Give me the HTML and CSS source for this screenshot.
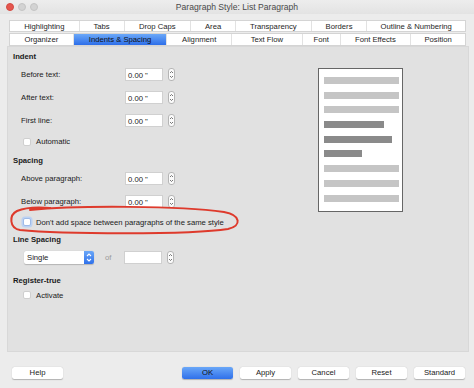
FILE: index.html
```html
<!DOCTYPE html>
<html lang="en">
<head>
  <meta charset="UTF-8" />
  <title>Paragraph Style: List Paragraph</title>
  <link rel="stylesheet" href="styles.css">
</head>
<body>
  <div class="window">

    <!-- TITLE BAR -->
    <div class="titlebar">
      <div class="lights">
        <span class="light red"></span>
        <span class="light"></span>
        <span class="light"></span>
      </div>
      <div class="title">Paragraph Style: List Paragraph</div>
      <div class="lights-spacer"></div>
    </div>

    <!-- TABS -->
    <div class="tabs">
      <div class="tab-row">
        <div class="tab" style="width: 70px">Highlighting</div>
        <div class="tab" style="width: 45px">Tabs</div>
        <div class="tab" style="width: 67px">Drop Caps</div>
        <div class="tab" style="width: 45px">Area</div>
        <div class="tab" style="width: 76px">Transparency</div>
        <div class="tab" style="width: 56px">Borders</div>
        <div class="tab" style="width: 98px">Outline &amp; Numbering</div>
      </div>
      <div class="tab-row">
        <div class="tab" style="width: 64px">Organizer</div>
        <div class="tab active" style="width: 94px">Indents &amp; Spacing</div>
        <div class="tab" style="width: 65px">Alignment</div>
        <div class="tab" style="width: 71px">Text Flow</div>
        <div class="tab" style="width: 38px">Font</div>
        <div class="tab" style="width: 71px">Font Effects</div>
        <div class="tab" style="width: 54px">Position</div>
      </div>
    </div>

    <!-- PANEL -->
    <div class="panel">
      <div class="form-col">
        <div class="heading first">Indent</div>
        <div class="field">
          <span class="label">Before text:</span>
          <span class="input">0.00 "</span>
          <span class="spin"><svg width="7" height="13" viewBox="0 0 7 13"><rect x="0.5" y="0.5" width="6" height="12" rx="2.5" fill="#fbfbfb" stroke="#b5b5b5"/><path d="M2 5 L3.5 3.5 L5 5 M2 8 L3.5 9.5 L5 8" fill="none" stroke="#555" stroke-width="0.8"/></svg></span>
        </div>
        <div class="field">
          <span class="label">After text:</span>
          <span class="input">0.00 "</span>
          <span class="spin"><svg width="7" height="13" viewBox="0 0 7 13"><rect x="0.5" y="0.5" width="6" height="12" rx="2.5" fill="#fbfbfb" stroke="#b5b5b5"/><path d="M2 5 L3.5 3.5 L5 5 M2 8 L3.5 9.5 L5 8" fill="none" stroke="#555" stroke-width="0.8"/></svg></span>
        </div>
        <div class="field">
          <span class="label">First line:</span>
          <span class="input">0.00 "</span>
          <span class="spin"><svg width="7" height="13" viewBox="0 0 7 13"><rect x="0.5" y="0.5" width="6" height="12" rx="2.5" fill="#fbfbfb" stroke="#b5b5b5"/><path d="M2 5 L3.5 3.5 L5 5 M2 8 L3.5 9.5 L5 8" fill="none" stroke="#555" stroke-width="0.8"/></svg></span>
        </div>
        <div class="check auto-row">
          <span class="box"></span>
          <span>Automatic</span>
        </div>

        <div class="heading">Spacing</div>
        <div class="field">
          <span class="label">Above paragraph:</span>
          <span class="input">0.00 "</span>
          <span class="spin"><svg width="7" height="13" viewBox="0 0 7 13"><rect x="0.5" y="0.5" width="6" height="12" rx="2.5" fill="#fbfbfb" stroke="#b5b5b5"/><path d="M2 5 L3.5 3.5 L5 5 M2 8 L3.5 9.5 L5 8" fill="none" stroke="#555" stroke-width="0.8"/></svg></span>
        </div>
        <div class="field">
          <span class="label">Below paragraph:</span>
          <span class="input">0.00 "</span>
          <span class="spin"><svg width="7" height="13" viewBox="0 0 7 13"><rect x="0.5" y="0.5" width="6" height="12" rx="2.5" fill="#fbfbfb" stroke="#b5b5b5"/><path d="M2 5 L3.5 3.5 L5 5 M2 8 L3.5 9.5 L5 8" fill="none" stroke="#555" stroke-width="0.8"/></svg></span>
        </div>
        <div class="check focus-row">
          <span class="box focused"></span>
          <span>Don't add space between paragraphs of the same style</span>
        </div>

        <div class="heading tight">Line Spacing</div>
        <div class="field line-row">
          <span class="select">
            <span class="select-text">Single</span>
            <span class="stepper"><svg width="10" height="13" viewBox="0 0 10 13"><path d="M3 5 L5 3 L7 5 M3 8 L5 10 L7 8" fill="none" stroke="#fff" stroke-width="1.1"/></svg></span>
          </span>
          <span class="of">of</span>
          <span class="input"></span>
          <span class="spin"><svg width="7" height="13" viewBox="0 0 7 13"><rect x="0.5" y="0.5" width="6" height="12" rx="2.5" fill="#fbfbfb" stroke="#b5b5b5"/><path d="M2 5 L3.5 3.5 L5 5 M2 8 L3.5 9.5 L5 8" fill="none" stroke="#555" stroke-width="0.8"/></svg></span>
        </div>

        <div class="heading register">Register-true</div>
        <div class="check activate-row">
          <span class="box"></span>
          <span>Activate</span>
        </div>
      </div>

      <!-- PREVIEW -->
      <div class="preview">
        <div class="bar"></div>
        <div class="bar"></div>
        <div class="bar"></div>
        <div class="bar dark" style="width: 60px"></div>
        <div class="bar dark" style="width: 68px"></div>
        <div class="bar dark" style="width: 38px"></div>
        <div class="bar"></div>
        <div class="bar"></div>
        <div class="bar"></div>
      </div>
    </div>

    <!-- BUTTONS -->
    <div class="buttons">
      <div class="btn">Help</div>
      <div class="btn-group">
        <div class="btn primary">OK</div>
        <div class="btn">Apply</div>
        <div class="btn">Cancel</div>
        <div class="btn">Reset</div>
        <div class="btn">Standard</div>
      </div>
    </div>

    <!-- red hand-drawn mark -->
    <svg class="annotation" width="474" height="388" viewBox="0 0 474 388">
      <path d="M30 210 C80 205, 180 206, 224 212 C241 215, 242 226, 228 229 C190 235, 60 234, 20 230 C9 228, 9 215, 17 211 C24 208, 38 207, 50 208" fill="none" stroke="#de3a2c" stroke-width="2" stroke-linecap="round"/>
    </svg>
  </div>
</body>
</html>
```

FILE: styles.css
```css
body {
  margin: 0;
  padding: 0;
  background-color: #ececec;
  font-family: "Liberation Sans", Arial, sans-serif;
  font-size: 7.7px;
  color: #1a1a1a;
}

.window {
  position: relative;
  width: 474px;
  height: 388px;
  overflow: hidden;
  background-color: #ececec;
}

/* title bar */
.titlebar {
  display: flex;
  align-items: center;
  height: 14px;
  background: linear-gradient(#ededed, #e3e3e3);
}

.lights {
  display: flex;
  gap: 4px;
  width: 40px;
  padding-left: 6px;
  box-sizing: border-box;
}

.lights-spacer {
  width: 40px;
}

.light {
  width: 8px;
  height: 8px;
  border-radius: 50%;
  background-color: #d3d3d3;
  border: 0.5px solid #c4c4c4;
  box-sizing: border-box;
}

.light.red {
  background-color: #e5564e;
  border-color: #d44a42;
}

.title {
  flex: 1;
  text-align: center;
  font-size: 8.6px;
  color: #4a4a4a;
}

/* tabs */
.tabs {
  margin: 6px 0 0 9px;
  width: 457px;
}

.tab-row {
  display: flex;
  height: 12px;
  background-color: #fff;
  border: 0.5px solid #d4d4d4;
  box-sizing: border-box;
  margin-bottom: 1px;
}

.tab-row + .tab-row {
  height: 13px;
  margin-bottom: 0;
}

.tab {
  display: flex;
  align-items: center;
  justify-content: center;
  border-right: 1px solid #e2e2e2;
  box-sizing: border-box;
  color: #1e1e1e;
}

.tab:last-child {
  border-right: none;
}

.tab.active {
  background: linear-gradient(#6ba8f8, #2d6ee9);
  color: #111;
}

/* panel */
.panel {
  display: flex;
  height: 306px;
  margin: 0 5px 0 7px;
  background-color: #e1e1e1;
  border: 0.5px solid #d8d8d8;
  box-sizing: border-box;
}

.form-col {
  width: 310px;
  padding-left: 5px;
  padding-top: 4px;
  box-sizing: border-box;
}

.heading {
  height: 12px;
  line-height: 12px;
  font-weight: bold;
  margin-top: 4px;
}

.heading.first {
  margin-top: 0;
}

.heading.tight {
  margin-top: 3px;
}

.heading.register {
  margin-top: 6px;
}

.field {
  display: flex;
  align-items: center;
  height: 23px;
  padding-left: 8px;
}

.label {
  width: 104px;
}

.input {
  width: 38px;
  height: 13px;
  line-height: 13px;
  padding-left: 2px;
  box-sizing: border-box;
  background-color: #fff;
  border: 0.5px solid #d0d0d0;
}

.spin {
  display: flex;
  margin-left: 5px;
}

.check {
  display: flex;
  align-items: center;
  padding-left: 10px;
}

.auto-row {
  height: 19px;
}

.focus-row {
  height: 18px;
}

.activate-row {
  height: 16px;
}

.box {
  width: 8px;
  height: 8px;
  margin-right: 5px;
  background-color: #fff;
  border: 0.5px solid #cfcfcf;
  border-radius: 2px;
  box-sizing: border-box;
}

.box.focused {
  border: 1px solid #9ebbe8;
  box-shadow: 0 0 0 1.5px #bcd2f3;
}

.line-row {
  height: 23px;
  padding-left: 11px;
}

.select {
  display: flex;
  width: 70px;
  height: 13px;
  background-color: #fff;
  border-radius: 2px;
  box-shadow: 0 0.5px 1px rgba(0, 0, 0, 0.2);
}

.select-text {
  flex: 1;
  line-height: 13px;
  padding-left: 3px;
}

.stepper {
  display: flex;
  width: 10px;
  border-radius: 0 2px 2px 0;
  background: linear-gradient(#6aa7f8, #2f70ea);
}

.of {
  margin: 0 13px 0 11px;
  color: #9a9a9a;
}

/* preview */
.preview {
  width: 85px;
  height: 144px;
  margin-top: 21px;
  padding: 8px 0 0 5px;
  box-sizing: border-box;
  background-color: #fff;
  border: 1px solid #666;
}

.bar {
  width: 75px;
  height: 7px;
  margin-bottom: 7.7px;
  background-color: #c5c5c5;
}

.bar.dark {
  background-color: #8a8a8a;
}

/* buttons */
.buttons {
  display: flex;
  justify-content: space-between;
  margin-top: 15px;
  padding: 0 9px 0 12px;
}

.btn-group {
  display: flex;
  gap: 7px;
}

.btn {
  width: 51px;
  height: 12px;
  line-height: 12px;
  text-align: center;
  background-color: #fff;
  border-radius: 2.5px;
  box-shadow: 0 0.5px 1px rgba(0, 0, 0, 0.25);
}

.btn.primary {
  background: linear-gradient(#6aa7f8, #2f70ea);
  color: #111;
}

.annotation {
  position: absolute;
  left: 0;
  top: 0;
  pointer-events: none;
}
```
